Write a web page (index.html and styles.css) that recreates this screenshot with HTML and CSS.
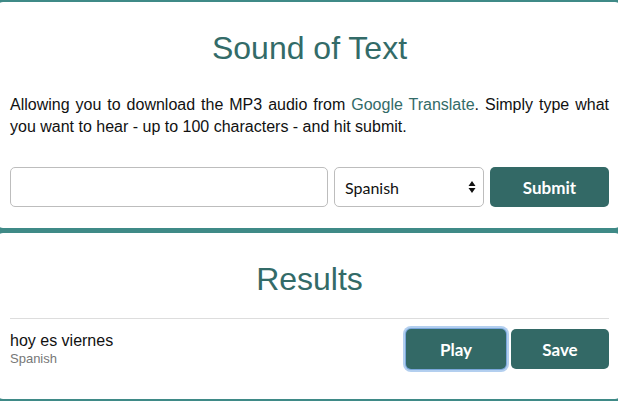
FILE: index.html
```html
<!DOCTYPE html>
<html lang="en">
<head>
    <meta charset="UTF-8">
    <meta name="viewport" content="width=device-width, initial-scale=1.0">
    <title>Sound of Text</title>
    <link rel="stylesheet" href="styles.css">
</head>
<body>
    <div class="card main-card">
        <h1>Sound of Text</h1>
        <p class="intro">Allowing you to download the MP3 audio from <a href="#">Google Translate</a>. Simply type what you want to hear - up to 100 characters - and hit submit.</p>
        <form class="sound-form">
            <input type="text" class="text-input">
            <div class="select-wrap">
                <select class="lang-select">
                    <option>Spanish</option>
                </select>
                <svg class="select-arrows" width="8" height="14" viewBox="0 0 8 14">
                    <path d="M4 1 L7.5 6 L0.5 6 Z M4 13 L7.5 8 L0.5 8 Z" fill="#111"/>
                </svg>
            </div>
            <button type="button" class="btn submit">Submit</button>
        </form>
    </div>

    <div class="card results-card">
        <h1>Results</h1>
        <div class="result">
            <div class="result-info">
                <div class="result-text">hoy es viernes</div>
                <div class="result-lang">Spanish</div>
            </div>
            <div class="result-actions">
                <button type="button" class="btn play focused">Play</button>
                <button type="button" class="btn save">Save</button>
            </div>
        </div>
    </div>
</body>
</html>
```

FILE: styles.css
```css
body {
    margin: 0;
    padding-top: 2px;
    background-color: #3f8a87;
    font-family: "Liberation Sans", Arial, sans-serif;
    overflow: hidden;
}

.card {
    background: #ffffff;
    border-radius: 6px;
    margin: 0 -3px 5px;
    padding: 0 12px 0 13px;
}

.main-card {
    height: 226px;
    box-sizing: border-box;
    padding-top: 28px;
}

.results-card {
    height: 166px;
    box-sizing: border-box;
    padding-top: 28px;
}

h1 {
    margin: 0;
    font-size: 32px;
    font-weight: normal;
    line-height: 37px;
    text-align: center;
    color: #336b68;
}

.intro {
    margin: 27px 0 0;
    font-size: 16px;
    line-height: 22px;
    text-align: justify;
    color: #111;
}

.intro a {
    color: #336b68;
    text-decoration: none;
}

.sound-form {
    display: flex;
    gap: 6px;
    margin-top: 29px;
    height: 40px;
}

.text-input {
    flex: 1;
    min-width: 0;
    box-sizing: border-box;
    height: 40px;
    border: 1px solid #bdbdbd;
    border-radius: 5px;
    padding: 0 10px;
    font-size: 16px;
}

.select-wrap {
    position: relative;
    width: 150px;
}

.lang-select {
    appearance: none;
    -webkit-appearance: none;
    width: 100%;
    height: 40px;
    box-sizing: border-box;
    border: 1px solid #bdbdbd;
    border-radius: 5px;
    background: #fff;
    padding: 0 10px;
    font-family: Lato, "Open Sans", sans-serif;
    font-size: 16px;
    color: #111;
}

.select-arrows {
    position: absolute;
    right: 8px;
    top: 13px;
    pointer-events: none;
}

.btn {
    height: 40px;
    border: none;
    border-radius: 5px;
    background-color: #336966;
    color: #ffffff;
    font-family: Lato, "Open Sans", sans-serif;
    font-weight: bold;
    font-size: 17px;
    cursor: pointer;
}

.submit {
    width: 119px;
}

.result {
    display: flex;
    justify-content: space-between;
    align-items: flex-start;
    margin-top: 20px;
    padding-top: 10px;
    border-top: 1px solid #dddddd;
}

.result-info {
    padding-top: 2px;
}

.result-text {
    font-size: 16px;
    line-height: 20px;
    color: #111;
}

.result-lang {
    font-size: 13px;
    line-height: 16px;
    color: #777;
}

.result-actions {
    display: flex;
    gap: 5px;
}

.play {
    width: 100px;
}

.save {
    width: 98px;
}

.focused {
    box-shadow: 0 0 0 1px #7aa7db, 0 0 0 3px #b3cfef;
}
```
